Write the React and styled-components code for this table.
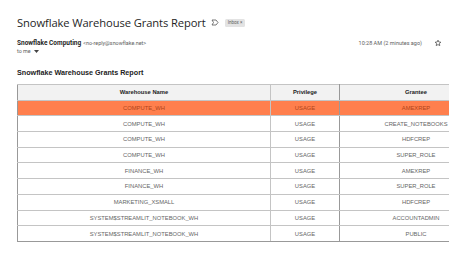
import React from 'react'
import styled, {createGlobalStyle} from 'styled-components'

const GlobalStyle = createGlobalStyle`
  body {
    margin: 0;
    background: #fff;
    font-family: Roboto, 'Liberation Sans', Arial, sans-serif;
  }
`

const Page = styled.div`
  width: 474px;
  height: 259px;
  overflow: hidden;
  box-sizing: border-box;
  padding: 15px 0 0 17px;
`

const Subject = styled.div`
  display: flex;
  align-items: center;
  height: 15px;
  gap: 5px;
  h1 {
    margin: 0;
    font-size: 11.2px;
    font-weight: 400;
    color: #1f1f1f;
    font-family: 'Open Sans', Roboto, sans-serif;
    letter-spacing: -0.1px;
  }
`

const Chip = styled.span`
  font-size: 4.6px;
  color: #666;
  background: #e3e3e3;
  border-radius: 1.5px;
  padding: 1px 3px;
  line-height: 6px;
  margin-left: 1px;
`

const SenderRow = styled.div`
  display: flex;
  align-items: center;
  justify-content: space-between;
  margin-top: 8px;
  padding-right: 32px;
  height: 9px;
`

const Sender = styled.div`
  font-size: 6.5px;
  color: #1f1f1f;
  b {
    font-weight: 700;
  }
  span {
    color: #5e5e5e;
    font-size: 5.4px;
    margin-left: 2px;
  }
`

const Meta = styled.div`
  display: flex;
  align-items: center;
  gap: 12px;
  font-size: 5.5px;
  color: #5e5e5e;
`

const ToMe = styled.div`
  font-size: 5.4px;
  color: #5e5e5e;
  margin-top: 1px;
  display: flex;
  align-items: center;
  gap: 3px;
`

const Heading = styled.h2`
  margin: 14px 0 0;
  font-family: 'Liberation Sans', Arial, sans-serif;
  font-size: 7.2px;
  font-weight: 700;
  color: #222;
`

const Clip = styled.div`
  width: 432px;
  overflow: hidden;
  margin-top: 7px;
`

const Table = styled.table`
  width: 475px;
  border-collapse: collapse;
  font-family: 'Liberation Sans', Arial, sans-serif;
  table-layout: fixed;
  th,
  td {
    height: 14.7px;
    padding: 0;
    text-align: center;
    border: 1px solid #c4c4c4;
    font-size: 5.8px;
  }
  th {
    background: #f2f2f2;
    color: #222;
    font-weight: 700;
  }
  td {
    color: #666;
  }
  td:nth-child(2),
  th:nth-child(2) {
    border-left-color: #999;
    border-right-color: #999;
  }
  tr:last-child td {
    border-bottom-color: #999;
  }
  td:first-child,
  th:first-child {
    border-left-color: #999;
  }
`

const Row = styled.tr`
  td {
    background: ${p => (p.$hi ? '#ff7f4d' : '#fff')};
    color: ${p => (p.$hi ? '#b0451b' : '#666')};
  }
`

const rows = [
  ['COMPUTE_WH', 'USAGE', 'AMEXREP'],
  ['COMPUTE_WH', 'USAGE', 'CREATE_NOTEBOOKS'],
  ['COMPUTE_WH', 'USAGE', 'HDFCREP'],
  ['COMPUTE_WH', 'USAGE', 'SUPER_ROLE'],
  ['FINANCE_WH', 'USAGE', 'AMEXREP'],
  ['FINANCE_WH', 'USAGE', 'SUPER_ROLE'],
  ['MARKETING_XSMALL', 'USAGE', 'HDFCREP'],
  ['SYSTEM$STREAMLIT_NOTEBOOK_WH', 'USAGE', 'ACCOUNTADMIN'],
  ['SYSTEM$STREAMLIT_NOTEBOOK_WH', 'USAGE', 'PUBLIC'],
]

const LabelIcon = () => (
  <svg width="8" height="7" viewBox="0 0 16 14">
    <path d="M2 2h8l4 5-4 5H2l3-5z" fill="none" stroke="#555" strokeWidth="1.6" strokeLinejoin="round" />
  </svg>
)

const Star = () => (
  <svg width="8" height="8" viewBox="0 0 24 24">
    <path
      d="M12 3.5l2.6 5.6 6.1.6-4.6 4.1 1.3 6-5.4-3.1-5.4 3.1 1.3-6-4.6-4.1 6.1-.6z"
      fill="none"
      stroke="#444"
      strokeWidth="2.2"
      strokeLinejoin="round"
    />
  </svg>
)

export default function App() {
  return (
    <Page>
      <GlobalStyle />
      <Subject>
        <h1>Snowflake Warehouse Grants Report</h1>
        <LabelIcon />
        <Chip>Inbox ×</Chip>
      </Subject>
      <SenderRow>
        <Sender>
          <b>Snowflake Computing</b>
          <span>&lt;no-reply@snowflake.net&gt;</span>
        </Sender>
        <Meta>
          <span>10:28 AM (2 minutes ago)</span>
          <Star />
        </Meta>
      </SenderRow>
      <ToMe>
        to me
        <svg width="5" height="3" viewBox="0 0 10 6">
          <path d="M0 0h10L5 6z" fill="#444" />
        </svg>
      </ToMe>
      <Heading>Snowflake Warehouse Grants Report</Heading>
      <Clip>
        <Table>
          <colgroup>
            <col style={{width: 253}} />
            <col style={{width: 69}} />
            <col style={{width: 153}} />
          </colgroup>
          <thead>
            <tr>
              <th>Warehouse Name</th>
              <th>Privilege</th>
              <th>Grantee</th>
            </tr>
          </thead>
          <tbody>
            {rows.map((r, i) => (
              <Row key={i} $hi={i === 0}>
                <td>{r[0]}</td>
                <td>{r[1]}</td>
                <td>{r[2]}</td>
              </Row>
            ))}
          </tbody>
        </Table>
      </Clip>
    </Page>
  )
}
